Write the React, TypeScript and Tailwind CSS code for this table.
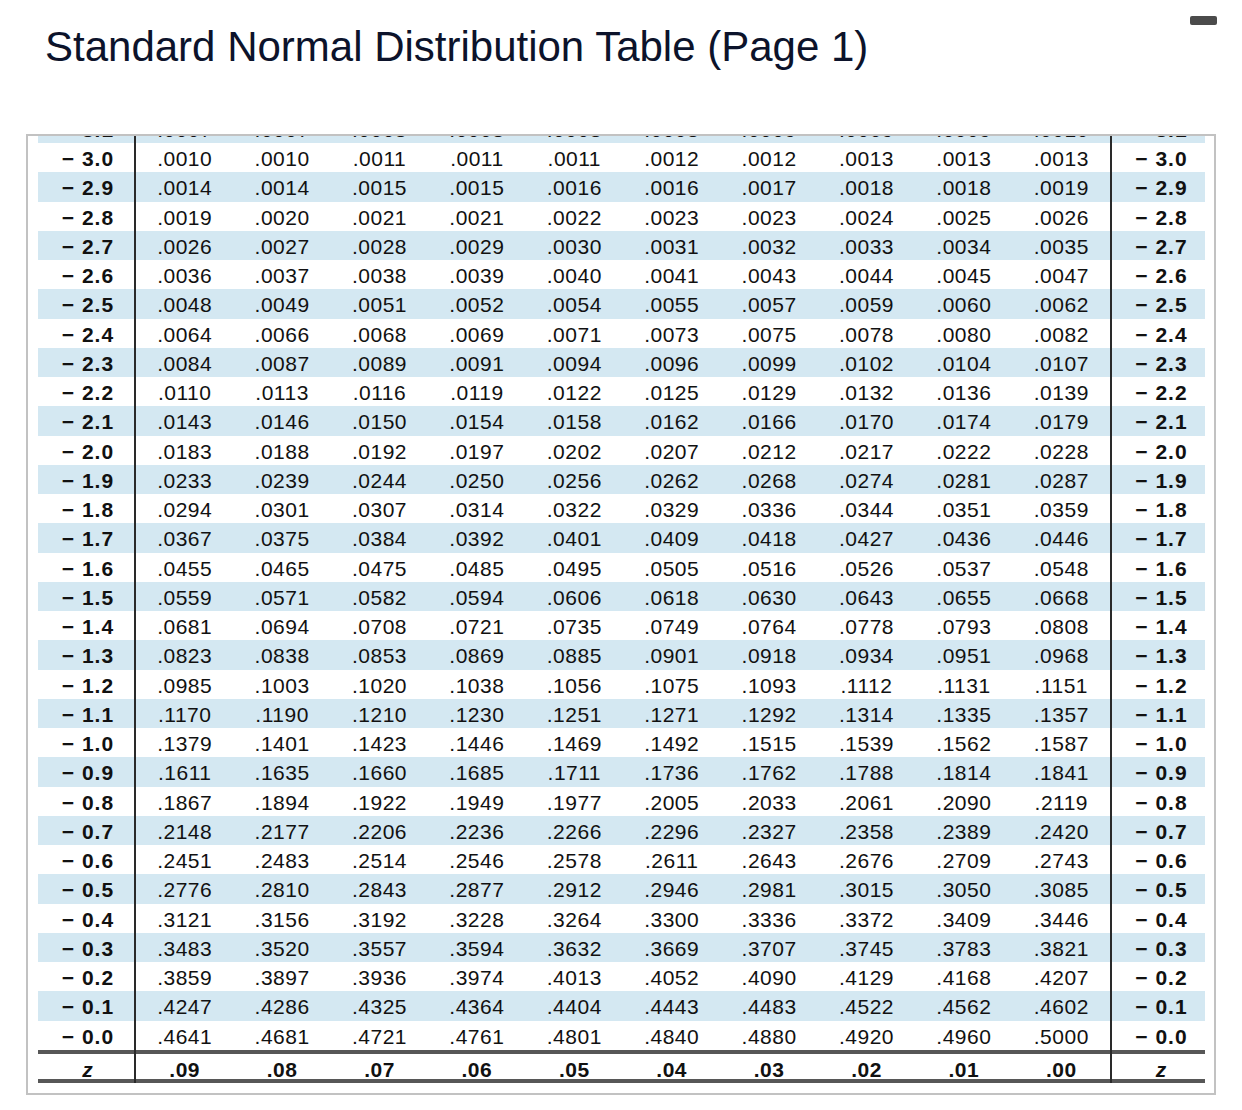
import React from "react";

const raw: [string, string][] = [
  ["3.1", ".0007 .0007 .0008 .0008 .0008 .0008 .0009 .0009 .0009 .0010"],
  ["3.0", ".0010 .0010 .0011 .0011 .0011 .0012 .0012 .0013 .0013 .0013"],
  ["2.9", ".0014 .0014 .0015 .0015 .0016 .0016 .0017 .0018 .0018 .0019"],
  ["2.8", ".0019 .0020 .0021 .0021 .0022 .0023 .0023 .0024 .0025 .0026"],
  ["2.7", ".0026 .0027 .0028 .0029 .0030 .0031 .0032 .0033 .0034 .0035"],
  ["2.6", ".0036 .0037 .0038 .0039 .0040 .0041 .0043 .0044 .0045 .0047"],
  ["2.5", ".0048 .0049 .0051 .0052 .0054 .0055 .0057 .0059 .0060 .0062"],
  ["2.4", ".0064 .0066 .0068 .0069 .0071 .0073 .0075 .0078 .0080 .0082"],
  ["2.3", ".0084 .0087 .0089 .0091 .0094 .0096 .0099 .0102 .0104 .0107"],
  ["2.2", ".0110 .0113 .0116 .0119 .0122 .0125 .0129 .0132 .0136 .0139"],
  ["2.1", ".0143 .0146 .0150 .0154 .0158 .0162 .0166 .0170 .0174 .0179"],
  ["2.0", ".0183 .0188 .0192 .0197 .0202 .0207 .0212 .0217 .0222 .0228"],
  ["1.9", ".0233 .0239 .0244 .0250 .0256 .0262 .0268 .0274 .0281 .0287"],
  ["1.8", ".0294 .0301 .0307 .0314 .0322 .0329 .0336 .0344 .0351 .0359"],
  ["1.7", ".0367 .0375 .0384 .0392 .0401 .0409 .0418 .0427 .0436 .0446"],
  ["1.6", ".0455 .0465 .0475 .0485 .0495 .0505 .0516 .0526 .0537 .0548"],
  ["1.5", ".0559 .0571 .0582 .0594 .0606 .0618 .0630 .0643 .0655 .0668"],
  ["1.4", ".0681 .0694 .0708 .0721 .0735 .0749 .0764 .0778 .0793 .0808"],
  ["1.3", ".0823 .0838 .0853 .0869 .0885 .0901 .0918 .0934 .0951 .0968"],
  ["1.2", ".0985 .1003 .1020 .1038 .1056 .1075 .1093 .1112 .1131 .1151"],
  ["1.1", ".1170 .1190 .1210 .1230 .1251 .1271 .1292 .1314 .1335 .1357"],
  ["1.0", ".1379 .1401 .1423 .1446 .1469 .1492 .1515 .1539 .1562 .1587"],
  ["0.9", ".1611 .1635 .1660 .1685 .1711 .1736 .1762 .1788 .1814 .1841"],
  ["0.8", ".1867 .1894 .1922 .1949 .1977 .2005 .2033 .2061 .2090 .2119"],
  ["0.7", ".2148 .2177 .2206 .2236 .2266 .2296 .2327 .2358 .2389 .2420"],
  ["0.6", ".2451 .2483 .2514 .2546 .2578 .2611 .2643 .2676 .2709 .2743"],
  ["0.5", ".2776 .2810 .2843 .2877 .2912 .2946 .2981 .3015 .3050 .3085"],
  ["0.4", ".3121 .3156 .3192 .3228 .3264 .3300 .3336 .3372 .3409 .3446"],
  ["0.3", ".3483 .3520 .3557 .3594 .3632 .3669 .3707 .3745 .3783 .3821"],
  ["0.2", ".3859 .3897 .3936 .3974 .4013 .4052 .4090 .4129 .4168 .4207"],
  ["0.1", ".4247 .4286 .4325 .4364 .4404 .4443 .4483 .4522 .4562 .4602"],
  ["0.0", ".4641 .4681 .4721 .4761 .4801 .4840 .4880 .4920 .4960 .5000"],
];

const cols = [".09", ".08", ".07", ".06", ".05", ".04", ".03", ".02", ".01", ".00"];

const gridCls =
  "grid grid-cols-[96px_2px_repeat(10,minmax(0,1fr))_2px_93px]";

function Label({ children, right }: { children: React.ReactNode; right?: boolean }) {
  return (
    <div
      className={`flex items-center justify-center whitespace-nowrap font-bold text-[21px] tracking-[1px] text-[#111111] ${
        right ? "pl-[6px]" : "pl-[4px]"
      }`}
    >
      {children}
    </div>
  );
}

function VLine() {
  return <div className="bg-[#2a2a2a]" />;
}

function Row({ z, values, shaded, first }: { z: string; values: string[]; shaded: boolean; first?: boolean }) {
  return (
    <div
      className={`${gridCls} h-[29.26px] ${shaded ? "bg-[#d4e8f2]" : "bg-white"} ${
        first ? "-mt-[22.26px]" : ""
      }`}
    >
      <Label>{"\u2212\u00a0" + z}</Label>
      <VLine />
      {values.map((v, i) => (
        <div
          key={i}
          className="flex items-center justify-center text-[21px] tracking-[0.5px] text-[#111111] whitespace-nowrap"
        >
          {v}
        </div>
      ))}
      <VLine />
      <Label right>{"\u2212\u00a0" + z}</Label>
    </div>
  );
}

function Sep() {
  return (
    <div className={`${gridCls} h-[4px]`}>
      <div className="bg-[#575757]" />
      <VLine />
      <div className="col-span-10 bg-[#575757]" />
      <VLine />
      <div className="bg-[#575757]" />
    </div>
  );
}

export default function App() {
  return (
    <div className="relative w-[1242px] h-[1110px] bg-white font-['Liberation_Sans',Arial,sans-serif]">
      <div className="absolute top-[16px] left-[1190px] w-[27px] h-[9px] rounded-[2px] bg-[#4b4b4b]" />
      <div className="h-[134px] pl-[45px] pt-[26px]">
        <h1 className="text-[42px] leading-none text-[#0c132b] font-normal">
          Standard Normal Distribution Table (Page 1)
        </h1>
      </div>
      <div className="ml-[26px] w-[1190px] h-[961px] border-2 border-[#c2c2c2] pl-[10px]">
        <div className="w-[1167px] h-[947px] overflow-hidden">
          {raw.map(([z, vals], i) => (
            <Row
              key={z}
              z={z}
              values={vals.split(" ")}
              shaded={i % 2 === 0}
              first={i === 0}
            />
          ))}
          <Sep />
          <div className={`${gridCls} h-[25px] bg-white`}>
            <Label>
              <span className="italic">z</span>
            </Label>
            <VLine />
            {cols.map((c) => (
              <div
                key={c}
                className="flex items-center justify-center font-bold text-[21px] tracking-[0.5px] text-[#111111]"
              >
                {c}
              </div>
            ))}
            <VLine />
            <Label right>
              <span className="italic">z</span>
            </Label>
          </div>
          <Sep />
        </div>
      </div>
    </div>
  );
}
